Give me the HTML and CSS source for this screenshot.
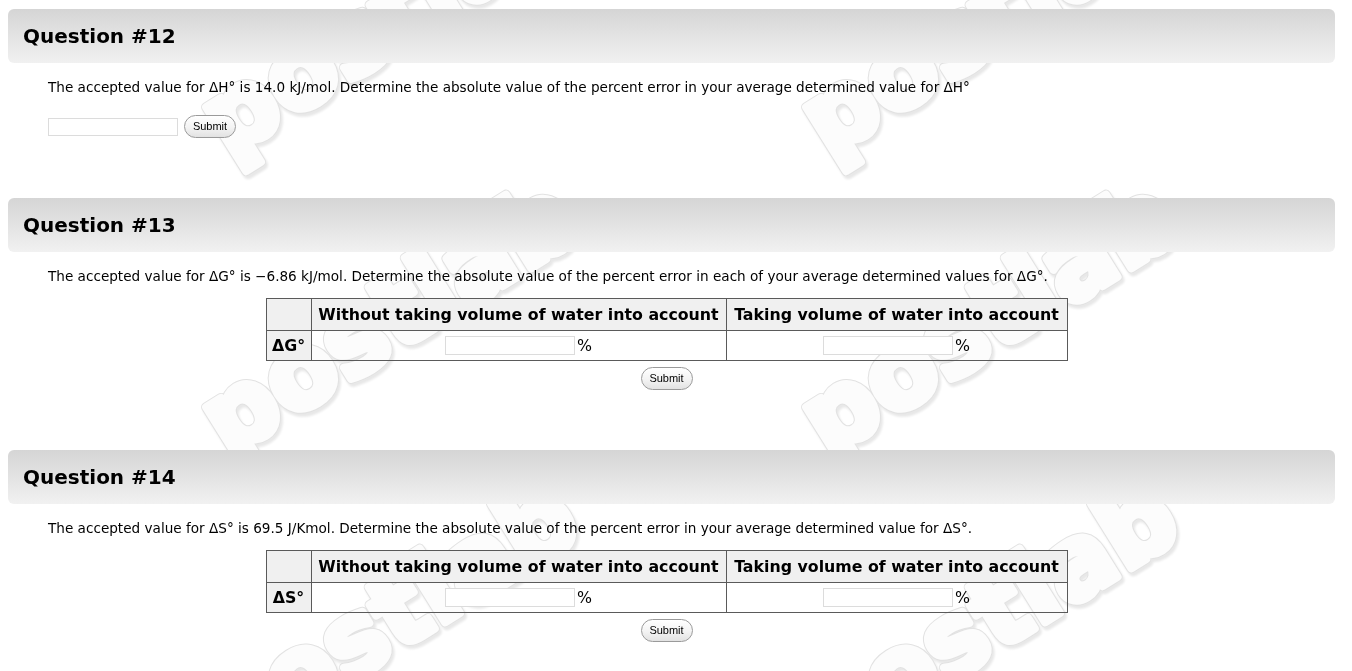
FILE: index.html
```html
<!DOCTYPE html>
<html lang="en">
<head>
<meta charset="utf-8">
<title>Questions</title>
<link rel="stylesheet" href="styles.css">
</head>
<body>
<div class="watermark" aria-hidden="true">
  <svg width="1352" height="671" viewBox="0 0 1352 671">
    <defs>
      <filter id="wm-shadow" x="-10%" y="-20%" width="130%" height="140%">
        <feDropShadow dx="2" dy="3" stdDeviation="1" flood-color="#dedede" flood-opacity="0.7"/>
      </filter>
    </defs>
    <g class="wm" filter="url(#wm-shadow)">
      <g transform="translate(228 158) rotate(-32)"><text class="wm-back">postlab</text><text class="wm-front">postlab</text></g>
      <g transform="translate(828 158) rotate(-32)"><text class="wm-back">postlab</text><text class="wm-front">postlab</text></g>
      <g transform="translate(228 458) rotate(-32)"><text class="wm-back">postlab</text><text class="wm-front">postlab</text></g>
      <g transform="translate(828 458) rotate(-32)"><text class="wm-back">postlab</text><text class="wm-front">postlab</text></g>
      <g transform="translate(228 758) rotate(-32)"><text class="wm-back">postlab</text><text class="wm-front">postlab</text></g>
      <g transform="translate(828 758) rotate(-32)"><text class="wm-back">postlab</text><text class="wm-front">postlab</text></g>
    </g>
  </svg>
</div>

<main class="page">
  <section class="question">
    <h2 class="q-title">Question #12</h2>
    <div class="q-body">
      <p class="prompt">The accepted value for ΔH° is 14.0 kJ/mol. Determine the absolute value of the percent error in your average determined value for ΔH°</p>
      <div class="answer-row">
        <input class="answer answer-short" type="text">
        <button class="submit" type="button">Submit</button>
      </div>
    </div>
  </section>

  <section class="question">
    <h2 class="q-title">Question #13</h2>
    <div class="q-body">
      <p class="prompt">The accepted value for ΔG° is −6.86 kJ/mol. Determine the absolute value of the percent error in each of your average determined values for ΔG°.</p>
      <table class="grid">
        <colgroup><col class="c-label"><col class="c-wide"><col class="c-narrow"></colgroup>
        <tr><th></th><th>Without taking volume of water into account</th><th>Taking volume of water into account</th></tr>
        <tr><th class="row-head">ΔG°</th><td><span class="cell-input"><input class="answer" type="text">%</span></td><td><span class="cell-input"><input class="answer" type="text">%</span></td></tr>
      </table>
      <div class="submit-row"><button class="submit" type="button">Submit</button></div>
    </div>
  </section>

  <section class="question">
    <h2 class="q-title">Question #14</h2>
    <div class="q-body">
      <p class="prompt">The accepted value for ΔS° is 69.5 J/Kmol. Determine the absolute value of the percent error in your average determined value for ΔS°.</p>
      <table class="grid">
        <colgroup><col class="c-label"><col class="c-wide"><col class="c-narrow"></colgroup>
        <tr><th></th><th>Without taking volume of water into account</th><th>Taking volume of water into account</th></tr>
        <tr><th class="row-head">ΔS°</th><td><span class="cell-input"><input class="answer" type="text">%</span></td><td><span class="cell-input"><input class="answer" type="text">%</span></td></tr>
      </table>
      <div class="submit-row"><button class="submit" type="button">Submit</button></div>
    </div>
  </section>
</main>
</body>
</html>
```

FILE: styles.css
```css
html, body {
  margin: 0;
  padding: 0;
  overflow: hidden;
}

body {
  position: relative;
  background: #ffffff;
  color: #000000;
  font-family: "DejaVu Sans", Verdana, sans-serif;
}

.watermark {
  position: absolute;
  top: 0;
  left: 0;
  z-index: 0;
  pointer-events: none;
}

.watermark svg {
  display: block;
}

.wm text {
  font-family: "DejaVu Sans", sans-serif;
  font-weight: bold;
  font-size: 100px;
  stroke-linejoin: round;
  stroke-linecap: round;
}

.wm-back {
  fill: #e2e2e2;
  stroke: #e2e2e2;
  stroke-width: 10px;
}

.wm-front {
  fill: #fcfcfc;
  stroke: #fcfcfc;
  stroke-width: 8px;
}

.page {
  position: relative;
  z-index: 1;
  padding: 9px 17px 0 8px;
}

.question {
  margin-bottom: 60px;
}

.q-title {
  margin: 0;
  height: 54px;
  display: flex;
  align-items: center;
  padding-left: 15px;
  border-radius: 6px;
  background: linear-gradient(#d5d5d5, #f1f1f1);
  font-size: 20px;
  font-weight: bold;
}

.q-body {
  padding: 0 50px 0 40px;
}

.prompt {
  margin: 16px 0 0;
  font-size: 13.6px;
  line-height: 16px;
}

.answer-row {
  margin-top: 20px;
  height: 23px;
  display: flex;
  align-items: center;
  gap: 6px;
}

.answer {
  box-sizing: border-box;
  width: 130px;
  height: 19px;
  margin: 0;
  padding: 0 2px;
  border: 1px solid #dcdcdc;
  background: #ffffff;
  font: 13px "DejaVu Sans", sans-serif;
}

.answer-short {
  height: 18px;
}

.submit {
  box-sizing: border-box;
  width: 52px;
  height: 23px;
  margin: 0;
  padding: 0;
  border: 1px solid #9a9a9a;
  border-radius: 12px;
  background: linear-gradient(#ffffff, #f3f3f3 55%, #e2e2e2);
  color: #000000;
  font-family: "Liberation Sans", Helvetica, Arial, sans-serif;
  font-size: 11px;
  line-height: 21px;
}

.grid {
  margin: 14px auto 0;
  border-collapse: collapse;
  table-layout: fixed;
  width: 801px;
  font-size: 15.8px;
}

.c-label { width: 45px; }
.c-wide { width: 415px; }
.c-narrow { width: 341px; }

.grid th,
.grid td {
  border: 1px solid #5a5a5a;
}

.grid th {
  background: #f0f0f0;
  font-weight: bold;
  padding: 6px 4px;
  line-height: 19px;
  white-space: nowrap;
  text-align: center;
}

.grid th.row-head {
  padding: 5px 4px;
}

.grid td {
  padding: 5px 4px;
  line-height: 19px;
  height: 19px;
  text-align: center;
  white-space: nowrap;
}

.cell-input {
  display: inline-flex;
  align-items: center;
  gap: 2px;
  height: 19px;
  vertical-align: top;
}

.submit-row {
  margin-top: 6px;
  height: 23px;
  text-align: center;
}
```
